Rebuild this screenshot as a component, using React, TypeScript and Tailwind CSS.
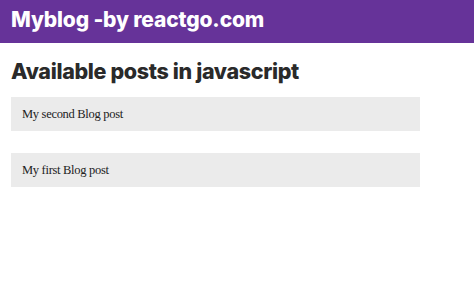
import React from "react";

const posts = [
  { id: 2, title: "My second Blog post" },
  { id: 1, title: "My first Blog post" },
];

const App = () => {
  return (
    <div className="min-h-screen bg-white" style={{ fontFamily: "Inter, 'Liberation Sans', sans-serif" }}>
      <header className="h-[43px] bg-[#663399] px-[11px] flex items-center">
        <h1 className="text-[21px] font-extrabold text-white leading-none pb-[4px] tracking-[-0.15px]">Myblog -by reactgo.com</h1>
      </header>
      <main className="px-[11px] pt-[15px]">
        <h2 className="text-[21.5px] font-extrabold text-[#2a2a2a] leading-[26px] tracking-[-0.35px]">Available posts in javascript</h2>
        <div className="mt-[13px] flex flex-col gap-[22px] w-[409px]">
          {posts.map(post => (
            <div key={post.id} className="h-[34px] bg-[#ebebeb] px-[11px] flex items-center">
              <p className="text-[12.5px] text-[#222] tracking-[-0.3px]" style={{ fontFamily: "'Liberation Serif', Georgia, serif" }}>{post.title}</p>
            </div>
          ))}
        </div>
      </main>
    </div>
  );
};

export default App;
